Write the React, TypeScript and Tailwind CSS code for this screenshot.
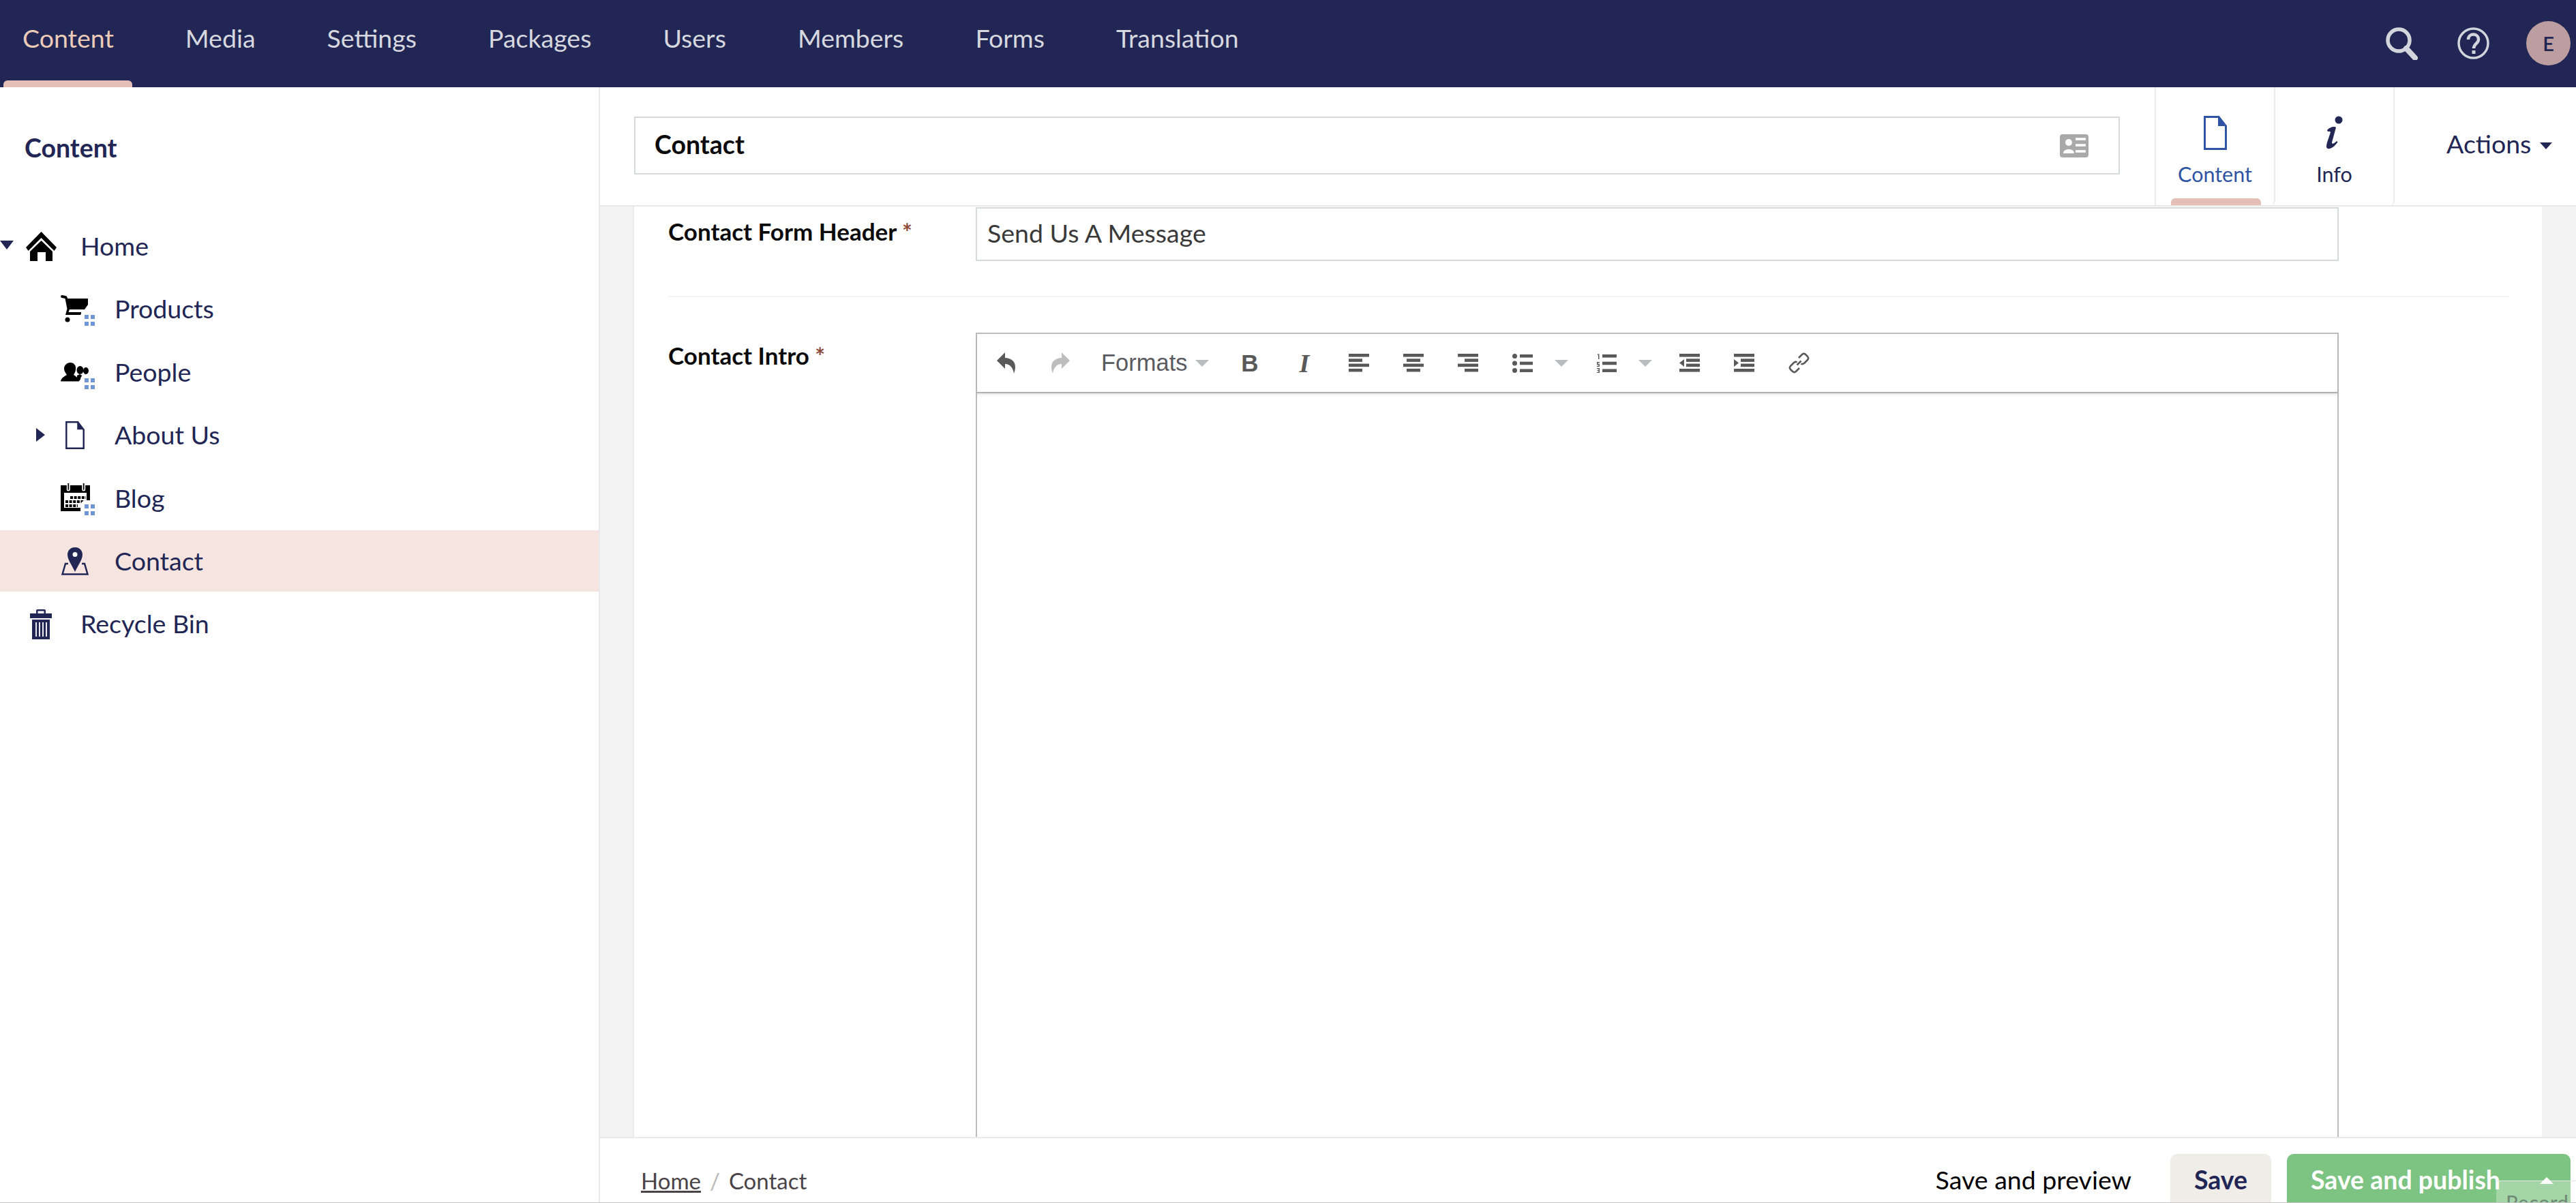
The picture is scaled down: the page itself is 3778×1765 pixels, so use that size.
import React from "react";

const navItems = ["Content", "Media", "Settings", "Packages", "Users", "Members", "Forms", "Translation"];

const HomeIcon = () => (
  <svg width="45" height="43" viewBox="0 0 45 43" fill="#000">
    <path d="M0 23 L22.5 0 L45 23 L41.5 28 L22.5 9 L3.5 28 Z" />
    <path d="M6 29 L22.5 13 L39 29 V43 H29 V30 H17 V43 H6 Z" />
  </svg>
);

const CartIcon = () => (
  <svg width="42" height="41" viewBox="0 0 42 41" fill="#000">
    <path d="M0 2 Q0 0 2 0 L7 1 Q9 1 9.5 3 L10 5 H40 V14 L35 21 H13 L11.5 25 H30 V29 H7 L9.5 20 L6.5 5 L2 4 Q0 4 0 2 Z" />
    <circle cx="10" cy="36" r="3.5" />
  </svg>
);

const PeopleIcon = () => (
  <svg width="42" height="28" viewBox="0 0 42 28" fill="#000">
    <path d="M14 0 C20 0 23 5 22 10 C22 13 20 16 19 18 C22 20 26 22 27 27.5 H0 C1 22 6 20 9 18 C8 16 5 13 5 9 C5 4 9 0 14 0 Z" />
    <ellipse cx="28.5" cy="11" rx="5" ry="6" />
    <path d="M24 19 L28 17 L33 20 L27 27 L24 24 Z" />
    <ellipse cx="37" cy="12" rx="4" ry="5" />
    <path d="M32 19 L37 16 L40 19 L34 23 Z" />
  </svg>
);

const DocIcon = ({ color, w, h }: { color: string; w: number; h: number }) => (
  <svg width={w} height={h} viewBox="0 0 34 50" fill="none">
    <path d="M1.5 1.5 H22 L32.5 15 V48.5 H1.5 Z" stroke={color} strokeWidth="3" fill="#fff" />
    <path d="M21 1.5 L32.5 15 H21 Z" fill={color} />
  </svg>
);

const CalendarIcon = () => (
  <svg width="43" height="43" viewBox="0 0 43 43">
    <rect x="0" y="3" width="43" height="38" fill="#000" />
    <rect x="5" y="14" width="33" height="22" fill="#fff" />
    <path d="M11.3 2 V9 M33.7 2 V9" stroke="#fff" strokeWidth="5" strokeLinecap="round" />
    <path d="M11.3 0 V9 M33.7 0 V9" stroke="#000" strokeWidth="1.8" strokeLinecap="round" />
    <path d="M14 21 H37 M7 27 H37 M7 33 H25" stroke="#000" strokeWidth="4" strokeDasharray="4 1.6" />
  </svg>
);

const PinIcon = () => (
  <svg width="40" height="41" viewBox="0 0 40 41">
    <path d="M20 0 C12 0 9 6 9 11 C9 18 17 29 20 36 C23 29 31 18 31 11 C31 6 28 0 20 0 Z" fill="#212654" />
    <circle cx="20" cy="10.5" r="3.5" fill="#fff" />
    <path d="M10 24 H6 L1.5 39.5 H38.5 L34 24 H30" stroke="#212654" strokeWidth="2.5" fill="none" />
  </svg>
);

const TrashIcon = () => (
  <svg width="32" height="44" viewBox="0 0 32 44">
    <path d="M0 6 H9 V2 Q9 0 11 0 H21 Q23 0 23 2 V6 H32 V13 H0 Z M11.5 2.5 V6 H20.5 V2.5 Z" fill="#212654" fillRule="evenodd" />
    <path d="M3 15 H29 V44 H3 Z" fill="#212654" />
    <path d="M9 19 V40 M14 19 V40 M19 19 V40 M24 19 V40" stroke="#fff" strokeWidth="1.8" />
  </svg>
);

const DotsBadge = () => (
  <span className="absolute top-[49px] left-[118px] grid grid-cols-2 gap-x-[3px] gap-y-[4px] rounded-[8px] bg-white p-[6px]">
    <span className="h-[6px] w-[6px] bg-[#7097d4]" />
    <span className="h-[6px] w-[6px] bg-[#7097d4]" />
    <span className="h-[6px] w-[6px] bg-[#7097d4]" />
    <span className="h-[6px] w-[6px] bg-[#7097d4]" />
  </span>
);

const TreeRow = ({
  label,
  icon,
  caret,
  child,
  dots,
  active,
}: {
  label: string;
  icon: React.ReactNode;
  caret?: "down" | "right";
  child?: boolean;
  dots?: boolean;
  active?: boolean;
}) => (
  <div className={`relative flex h-[92.4px] items-center ${child ? "pl-[168px]" : "pl-[118px]"}`}>
    {active && <span className="absolute inset-x-0 inset-y-[1px] bg-[#f6e4e1]" />}
    {caret === "down" && (
      <span className="absolute top-[38px] left-0 h-0 w-0 border-x-[10px] border-t-[13px] border-x-transparent border-t-[#212654]" />
    )}
    {caret === "right" && (
      <span className="absolute top-[36px] left-[53px] h-0 w-0 border-y-[10px] border-l-[13px] border-y-transparent border-l-[#212654]" />
    )}
    <span className={`absolute top-0 flex h-full items-center justify-center ${child ? "left-[88px] w-[44px]" : "left-[37px] w-[46px]"}`}>
      {icon}
    </span>
    {dots && <DotsBadge />}
    <span className="relative text-[37.5px] text-[#212654]">{label}</span>
  </div>
);

const Lines = ({ rows }: { rows: [number, number][] }) => (
  <svg width="30" height="28" viewBox="0 0 30 28" fill="#595959">
    {rows.map(([x, w], i) => (
      <rect key={i} x={x} y={i * 7.3} width={w} height="4.6" />
    ))}
  </svg>
);

const ToolBtn = ({ children }: { children: React.ReactNode }) => (
  <span className="flex h-full w-[80px] items-center justify-center">{children}</span>
);

const SmallCaret = () => (
  <span className="h-0 w-0 border-x-[10px] border-t-[10px] border-x-transparent border-t-[#b9bbbf]" />
);

const EditorToolbar = () => (
  <div className="flex h-[87px] items-center border-b-2 border-b-[#b0b0b0] pl-[2px] shadow-[0_2px_3px_rgba(0,0,0,0.1)]">
    <ToolBtn>
      <svg width="27" height="31" viewBox="0 0 27 31" fill="#595959">
        <path d="M12 0 V8 C20 8 27 13 27 21 C27 25 26 28 25 31 C24 24 20 17 12 17 V24 L0 12 Z" />
      </svg>
    </ToolBtn>
    <ToolBtn>
      <svg width="27" height="31" viewBox="0 0 27 31" fill="#bdbdbd">
        <path d="M15 0 V8 C7 8 0 13 0 21 C0 25 1 28 2 31 C3 24 7 17 15 17 V24 L27 12 Z" />
      </svg>
    </ToolBtn>
    <span className="flex h-full w-[198px] items-center gap-[11px] pl-[20px] font-['Liberation_Sans',sans-serif] text-[34.5px] text-[#595b60]">
      Formats
      <SmallCaret />
    </span>
    <ToolBtn>
      <span className="font-['Liberation_Sans',sans-serif] text-[35px] leading-none font-bold text-[#595959]">B</span>
    </ToolBtn>
    <ToolBtn>
      <span className="font-['Liberation_Serif',serif] text-[38px] leading-none font-bold text-[#595959] italic">I</span>
    </ToolBtn>
    <ToolBtn>
      <Lines rows={[[0, 30], [0, 20], [0, 30], [0, 20]]} />
    </ToolBtn>
    <ToolBtn>
      <Lines rows={[[0, 30], [5, 20], [0, 30], [5, 20]]} />
    </ToolBtn>
    <ToolBtn>
      <Lines rows={[[0, 30], [10, 20], [0, 30], [10, 20]]} />
    </ToolBtn>
    <ToolBtn>
      <svg width="30" height="28" viewBox="0 0 30 28" fill="#595959">
        <ellipse cx="3.5" cy="3.5" rx="3.5" ry="3.5" />
        <ellipse cx="3.5" cy="14" rx="3.5" ry="3.5" />
        <ellipse cx="3.5" cy="24.5" rx="3.5" ry="3.5" />
        <rect x="11" y="1" width="19" height="4.6" />
        <rect x="11" y="11.7" width="19" height="4.6" />
        <rect x="11" y="22.4" width="19" height="4.6" />
      </svg>
    </ToolBtn>
    <span className="ml-[7px] flex w-[36px]">
      <SmallCaret />
    </span>
    <ToolBtn>
      <svg width="30" height="28" viewBox="0 0 30 28" fill="#595959">
        <path d="M2 0.5 H4.5 V8 H3 V2 H2 Z M1 12 H5 V13.5 H2.5 V15 H5 V19 H1 V17.8 H3.5 V16.2 H1 Z M1 21 H5 V28 H1 V26.8 H3.5 V25 H1.5 V24 H3.5 V22.2 H1 Z" />
        <rect x="9" y="1" width="21" height="4.6" />
        <rect x="9" y="11.7" width="21" height="4.6" />
        <rect x="9" y="22.4" width="21" height="4.6" />
      </svg>
    </ToolBtn>
    <span className="ml-[7px] flex w-[35px]">
      <SmallCaret />
    </span>
    <ToolBtn>
      <svg width="30" height="28" viewBox="0 0 30 28" fill="#595959">
        <rect x="0" y="0" width="30" height="4.6" />
        <rect x="10" y="7.3" width="20" height="4.6" />
        <rect x="10" y="14.6" width="20" height="4.6" />
        <rect x="0" y="22" width="30" height="4.6" />
        <path d="M7 8 V19 L0 13.5 Z" />
      </svg>
    </ToolBtn>
    <ToolBtn>
      <svg width="30" height="28" viewBox="0 0 30 28" fill="#595959">
        <rect x="0" y="0" width="30" height="4.6" />
        <rect x="10" y="7.3" width="20" height="4.6" />
        <rect x="10" y="14.6" width="20" height="4.6" />
        <rect x="0" y="22" width="30" height="4.6" />
        <path d="M0 8 V19 L7 13.5 Z" />
      </svg>
    </ToolBtn>
    <ToolBtn>
      <svg width="31" height="31" viewBox="0 0 31 31" fill="none" stroke="#595959" strokeWidth="2.6">
        <path d="M12.5 18.5 L18.5 12.5" />
        <path d="M15 8 L20 3 Q22.5 0.8 25 3 L28 6 Q30.2 8.5 28 11 L23 16 Q20.5 18 18.5 16.5" />
        <path d="M16 23 L11 28 Q8.5 30.2 6 28 L3 25 Q0.8 22.5 3 20 L8 15 Q10.5 13 12.5 14.5" />
      </svg>
    </ToolBtn>
  </div>
);

export default function App() {
  return (
    <div className="flex h-[1765px] w-[3778px] flex-col overflow-hidden border-b border-b-[#c8c8c8] bg-white font-['Lato',sans-serif]">
      <header className="relative flex h-[128px] shrink-0 items-center bg-[#212654] pr-[8px] pl-[33px]">
        <nav className="flex flex-1 items-center gap-[105px] pb-[16px]">
          {navItems.map((item, i) => (
            <span key={item} className={`text-[37.5px] ${i === 0 ? "text-[#eccbb9]" : "text-[#d6d7df]"}`}>
              {item}
            </span>
          ))}
        </nav>
        <span className="absolute bottom-0 left-[5px] h-[10px] w-[189px] rounded-t-[6px] bg-[#e4bfb7]" />
        <div className="flex items-center pb-[1px]">
          <svg width="48" height="48" viewBox="0 0 48 48" fill="none">
            <circle cx="19" cy="19" r="16" stroke="#d3d5dc" strokeWidth="5.5" />
            <path d="M30 31 L43 45" stroke="#d3d5dc" strokeWidth="8" strokeLinecap="round" />
          </svg>
          <svg className="ml-[57px]" width="47" height="47" viewBox="0 0 47 47" fill="none">
            <circle cx="23.5" cy="23.5" r="21.5" stroke="#d3d5dc" strokeWidth="3.5" />
            <path d="M16 18 C16 8 31 8 31 18 C31 24 24 24 24 31" stroke="#d3d5dc" strokeWidth="4.5" />
            <rect x="21.5" y="34" width="5" height="5" fill="#d3d5dc" />
          </svg>
          <span className="ml-[54px] flex h-[65px] w-[65px] items-center justify-center rounded-full bg-[#bc9ea0] text-[29px] font-semibold text-[#212654]">
            E
          </span>
        </div>
      </header>

      <div className="flex min-h-0 flex-1">
        <aside className="w-[880px] shrink-0 border-r-2 border-r-[#e9e9eb]">
          <div className="flex h-[187px] items-start pt-[65px] pl-[36px] text-[37.5px] leading-[48px] font-bold text-[#212654]">
            Content
          </div>
          <TreeRow label="Home" caret="down" icon={<HomeIcon />} />
          <TreeRow label="Products" child dots icon={<CartIcon />} />
          <TreeRow label="People" child dots icon={<PeopleIcon />} />
          <TreeRow label="About Us" child caret="right" icon={<DocIcon color="#212654" w={30} h={41} />} />
          <TreeRow label="Blog" child dots icon={<CalendarIcon />} />
          <TreeRow label="Contact" child active icon={<span className="relative flex"><PinIcon /></span>} />
          <TreeRow label="Recycle Bin" icon={<TrashIcon />} />
        </aside>

        <main className="flex min-w-0 flex-1 flex-col">
          <div className="flex h-[175px] shrink-0 border-b-2 border-b-[#e9e9eb]">
            <div className="flex flex-1 items-start pt-[43px] pl-[50px]">
              <div className="flex h-[85px] w-[2179px] items-center justify-between border-2 border-[#d8d9da] pr-[44px] pl-[28px]">
                <span className="pb-[3px] text-[37.5px] font-bold text-[#0b0b0b]">Contact</span>
                <svg width="42" height="34" viewBox="0 0 42 34">
                  <rect width="42" height="34" rx="4" fill="#a9a9a9" />
                  <circle cx="13" cy="12" r="5" fill="#fff" />
                  <path d="M5 28 C5 20 21 20 21 28 Z" fill="#fff" />
                  <path d="M23 7 H38 M23 16 H38 M23 25 H38" stroke="#fff" strokeWidth="3.5" />
                </svg>
              </div>
            </div>
            <div className="flex shrink-0">
              <div className="relative flex w-[177px] flex-col items-center rounded-br-[6px] border-x-2 border-x-[#ebebed] pt-[42px]">
                <DocIcon color="#2f54a3" w={34} h={50} />
                <span className="mt-[15px] text-[30.5px] leading-[40px] text-[#2f54a3]">Content</span>
                <span className="absolute bottom-0 left-[22px] h-[10px] w-[132px] rounded-t-[6px] bg-[#e4bfb7]" />
              </div>
              <div className="flex w-[175px] flex-col items-center rounded-br-[6px] border-r-2 border-r-[#ebebed] pt-[42px]">
                <svg width="26" height="50" viewBox="0 0 26 50" fill="#212654">
                  <circle cx="19" cy="6" r="5.5" />
                  <path d="M2 21 C6 16 13 15 15 17 L9 39 C9 42 12 41 16 37 L17.5 38.5 C12 46 7 49 3 48 C0 47 1 43 2 39 L7 24 C6 22 4 23 3 23 Z" />
                </svg>
                <span className="mt-[15px] text-[30.5px] leading-[40px] text-[#212654]">Info</span>
              </div>
              <div className="flex w-[266px] items-start gap-[13px] pt-[59px] pl-[76px] text-[37.5px] leading-[48px] text-[#212654]">
                Actions
                <span className="mt-[22px] h-0 w-0 border-x-[9px] border-t-[10px] border-x-transparent border-t-[#212654]" />
              </div>
            </div>
          </div>

          <div className="flex min-h-0 flex-1 bg-[#f4f4f4] pr-[50px] pl-[48px]">
            <div className="flex-1 overflow-hidden border-l-2 border-l-[#ebebed] bg-white pt-px pr-[47px] pl-[50px]">
              <div className="flex">
                <label className="w-[451px] shrink-0 pt-[13px] text-[35px] leading-[44px] font-bold text-[#0b0b0b]">
                  Contact Form Header <span className="text-[#8f4a3a]">*</span>
                </label>
                <div className="flex h-[79px] w-[1999px] items-center border-2 border-[#d8d9da] pb-[3px] pl-[15px] text-[37.5px] text-[#3a3a3a]">
                  Send Us A Message
                </div>
              </div>
              <div className="mt-[51px] mb-[52px] h-[2px] bg-[#f4f4f4]" />
              <div className="flex">
                <label className="w-[451px] shrink-0 pt-[11px] text-[35px] leading-[44px] font-bold text-[#0b0b0b]">
                  Contact Intro <span className="text-[#8f4a3a]">*</span>
                </label>
                <div className="h-[1400px] w-[1999px] border-2 border-[#bcbcbc]">
                  <EditorToolbar />
                </div>
              </div>
            </div>
          </div>

          <footer className="relative flex h-[96px] shrink-0 items-end justify-between border-t-2 border-t-[#e9e9eb] pr-[8px] pl-[60px]">
            <div className="mb-[12px] flex items-center gap-[13px] text-[33px] leading-[40px] text-[#4a4348]">
              <span className="underline">Home</span>
              <span className="text-[#b9b9b9]">/</span>
              <span>Contact</span>
            </div>
            <div className="flex h-[71px] items-start">
              <span className="mt-[14px] mr-[57px] text-[37.5px] leading-[48px] text-black">Save and preview</span>
              <span className="flex h-full w-[148px] items-start justify-center rounded-t-[10px] bg-[#f0ece8] pt-[14px] text-[37.5px] leading-[48px] font-bold text-[#212654]">
                Save
              </span>
              <span className="ml-[23px] flex h-full w-[416px] items-start rounded-t-[10px] bg-[#7dc382] pt-[14px] pl-[35px] text-[37.5px] leading-[48px] font-bold text-white">
                Save and publish
              </span>
            </div>
            <span className="absolute right-0 bottom-0 h-[32px] w-[117px] overflow-hidden border-t border-t-[#e6e6e6] bg-white/30 pt-[16px] pl-[14px] text-[30px] leading-[30px] text-[#6d8a72]">
              Record
            </span>
            <span className="absolute right-[33px] bottom-[27px] h-0 w-0 border-x-[10px] border-b-[10px] border-x-transparent border-b-white" />
          </footer>
        </main>
      </div>
    </div>
  );
}
